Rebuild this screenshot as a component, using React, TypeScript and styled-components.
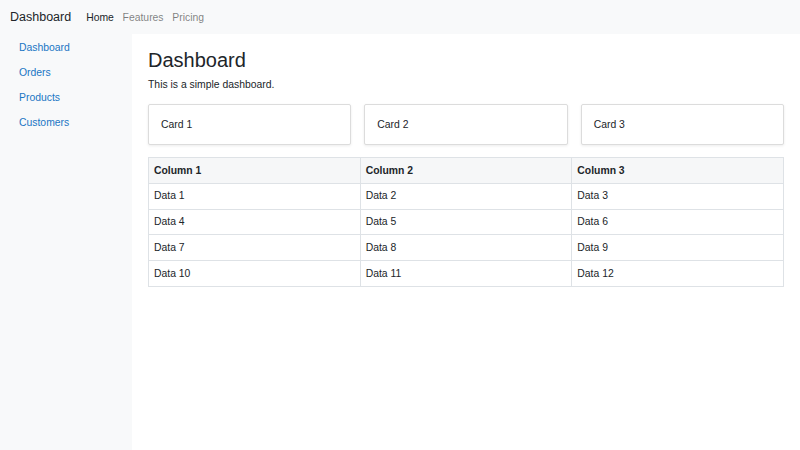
import styled, { createGlobalStyle } from 'styled-components';

const GlobalStyle = createGlobalStyle`
  *, *::before, *::after {
    box-sizing: border-box;
  }

  html, body {
    margin: 0;
    padding: 0;
    height: 100%;
  }

  body {
    font-family: 'Liberation Sans', Arial, sans-serif;
    font-size: 10.4px;
    line-height: 1.5;
    color: #212529;
    background: #ffffff;
  }

  #root {
    height: 100%;
  }
`;

const navLinks = [
  { label: 'Home', active: true },
  { label: 'Features', active: false },
  { label: 'Pricing', active: false },
];

const sideLinks = ['Dashboard', 'Orders', 'Products', 'Customers'];

const cards = ['Card 1', 'Card 2', 'Card 3'];

const columns = ['Column 1', 'Column 2', 'Column 3'];

const rows = [
  ['Data 1', 'Data 2', 'Data 3'],
  ['Data 4', 'Data 5', 'Data 6'],
  ['Data 7', 'Data 8', 'Data 9'],
  ['Data 10', 'Data 11', 'Data 12'],
];

export default function App() {
  return (
    <>
      <GlobalStyle />
      <Page>
        <Navbar>
          <Brand href="#">Dashboard</Brand>
          <NavList>
            {navLinks.map(({ label, active }) => (
              <NavLink key={label} href="#" $active={active}>
                {label}
              </NavLink>
            ))}
          </NavList>
        </Navbar>
        <Body>
          <Sidebar>
            {sideLinks.map((label) => (
              <SideLink key={label} href="#">
                {label}
              </SideLink>
            ))}
          </Sidebar>
          <Main>
            <Title>Dashboard</Title>
            <Lead>This is a simple dashboard.</Lead>
            <CardGrid>
              {cards.map((card) => (
                <Card key={card}>{card}</Card>
              ))}
            </CardGrid>
            <Table>
              <thead>
                <tr>
                  {columns.map((col) => (
                    <HeadCell key={col}>{col}</HeadCell>
                  ))}
                </tr>
              </thead>
              <tbody>
                {rows.map((row) => (
                  <tr key={row[0]}>
                    {row.map((cell) => (
                      <Cell key={cell}>{cell}</Cell>
                    ))}
                  </tr>
                ))}
              </tbody>
            </Table>
          </Main>
        </Body>
      </Page>
    </>
  );
}

const Page = styled.div`
  display: flex;
  flex-direction: column;
  height: 100%;
`;

const Navbar = styled.nav`
  display: flex;
  align-items: center;
  height: 34px;
  padding: 1px 10px 0;
  background-color: #f8f9fa;
`;

const Brand = styled.a`
  font-size: 12.5px;
  color: #212529;
  text-decoration: none;
  margin-right: 15px;
`;

const NavList = styled.div`
  display: flex;
  gap: 8.7px;
`;

const NavLink = styled.a<{ $active: boolean }>`
  font-size: 10.4px;
  text-decoration: none;
  color: ${({ $active }) => ($active ? '#212529' : 'rgba(0, 0, 0, 0.5)')};
`;

const Body = styled.div`
  display: flex;
  flex: 1;
`;

const Sidebar = styled.aside`
  display: flex;
  flex-direction: column;
  width: 132px;
  flex-shrink: 0;
  padding-top: 1px;
  background-color: #f8f9fa;
`;

const SideLink = styled.a`
  display: block;
  padding: 4.7px 19px;
  line-height: 15.6px;
  color: #1a76c4;
  text-decoration: none;
`;

const Main = styled.main`
  flex: 1;
  padding: 14px 16px 16px;
  background-color: #ffffff;
`;

const Title = styled.h1`
  margin: 0 0 5.3px;
  font-size: 20px;
  font-weight: 400;
  line-height: 24px;
`;

const Lead = styled.p`
  margin: 0 0 11px;
`;

const CardGrid = styled.div`
  display: grid;
  grid-template-columns: repeat(3, 1fr);
  gap: 13px;
  margin-bottom: 12.4px;
`;

const Card = styled.div`
  padding: 11.6px 12px;
  border: 1px solid #dcdcdc;
  border-radius: 2px;
  background-color: #ffffff;
  box-shadow: 0 1px 3px rgba(0, 0, 0, 0.08);
`;

const Table = styled.table`
  width: 100%;
  table-layout: fixed;
  border-collapse: collapse;
`;

const HeadCell = styled.th`
  padding: 4.6px 5px;
  text-align: left;
  font-weight: 700;
  background-color: #f6f7f8;
  border: 1px solid #dee2e6;
`;

const Cell = styled.td`
  padding: 4.6px 5px;
  border: 1px solid #dee2e6;
`;
